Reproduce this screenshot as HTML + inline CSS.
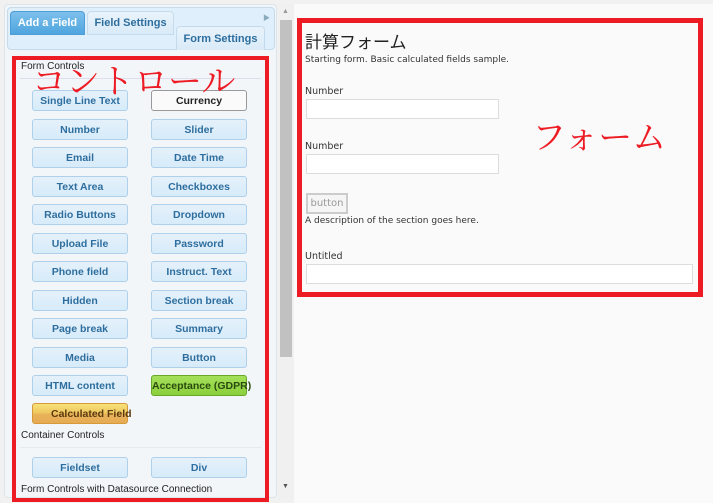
<!DOCTYPE html>
<html><head><meta charset="utf-8"><style>
*{box-sizing:border-box;margin:0;padding:0}
body{width:713px;height:503px;background:#f1f1f1;position:relative;overflow:hidden;font-family:"Liberation Sans","Noto Sans CJK JP",sans-serif}
.a{position:absolute}
.btn{position:absolute;width:96px;height:21px;border:1px solid #aed0ea;border-radius:3px;background:linear-gradient(#e4f1fb,#d7ebf9);color:#2e6e9e;font-weight:bold;font-size:10.5px;text-align:center;line-height:20px;white-space:nowrap}
.lab{position:absolute;font-size:10px;color:#222}
.rt{position:absolute;font-family:"DejaVu Sans",sans-serif;font-size:9.5px;color:#333}
.in{position:absolute;height:20px;border:1px solid #ddd;background:#fff}
</style></head><body>
<div class="a" style="left:4px;top:4px;width:273px;height:494px;background:#f3f6f9;border:1px solid #dde4ea;border-radius:4px"></div>
<div class="a" style="left:7px;top:7px;width:268px;height:43px;background:#dfeffc;border:1px solid #c5dbec;border-radius:4px"></div>
<div class="a" style="left:10px;top:11px;width:75px;height:24px;background:linear-gradient(#7dc0ec,#4ea5de);border:1px solid #4d9dd6;border-radius:4px 4px 0 0;color:#fff;font-weight:bold;font-size:11px;text-align:center;line-height:22px">Add a Field</div>
<div class="a" style="left:87px;top:11px;width:87px;height:24px;background:linear-gradient(#e9f3fb,#d9ebf8);border:1px solid #c5dbec;border-radius:4px 4px 0 0;color:#2e6e9e;font-weight:bold;font-size:11px;text-align:center;line-height:22px">Field Settings</div>
<div class="a" style="left:176px;top:26px;width:89px;height:24px;background:linear-gradient(#e9f3fb,#d9ebf8);border:1px solid #c5dbec;border-bottom:none;border-radius:4px 4px 0 0;color:#2e6e9e;font-weight:bold;font-size:11px;text-align:center;line-height:24px">Form Settings</div>
<div class="a" style="left:263px;top:13px;font-size:7px;color:#8ab">&#9654;</div>
<div class="lab" style="left:21px;top:61px">Form Controls</div>
<div class="a" style="left:20px;top:78px;width:241px;height:1px;background:#dde"></div>
<div class="btn" style="left:32px;top:90px">Single Line Text</div>
<div class="btn" style="left:151px;top:90px;background:#fafafa;border-color:#999;color:#222">Currency</div>
<div class="btn" style="left:32px;top:119px">Number</div><div class="btn" style="left:151px;top:119px">Slider</div>
<div class="btn" style="left:32px;top:147px">Email</div><div class="btn" style="left:151px;top:147px">Date Time</div>
<div class="btn" style="left:32px;top:176px">Text Area</div><div class="btn" style="left:151px;top:176px">Checkboxes</div>
<div class="btn" style="left:32px;top:204px">Radio Buttons</div><div class="btn" style="left:151px;top:204px">Dropdown</div>
<div class="btn" style="left:32px;top:233px">Upload File</div><div class="btn" style="left:151px;top:233px">Password</div>
<div class="btn" style="left:32px;top:261px">Phone field</div><div class="btn" style="left:151px;top:261px">Instruct. Text</div>
<div class="btn" style="left:32px;top:290px">Hidden</div><div class="btn" style="left:151px;top:290px">Section break</div>
<div class="btn" style="left:32px;top:318px">Page break</div><div class="btn" style="left:151px;top:318px">Summary</div>
<div class="btn" style="left:32px;top:347px">Media</div><div class="btn" style="left:151px;top:347px">Button</div>
<div class="btn" style="left:32px;top:375px">HTML content</div>
<div class="btn" style="left:151px;top:375px;background:linear-gradient(#a4e05a,#8ccf3c);border-color:#6aa82a;color:#2a4a10;overflow:visible">Acceptance (GDPR)</div>
<div class="btn" style="left:32px;top:403px;background:linear-gradient(#f7e27a 0%,#f0c860 45%,#e8b25a 55%,#e6ab55);border-color:#d79a3a;color:#5a3a10;padding-left:18px;overflow:visible">Calculated Field</div>
<div class="lab" style="left:21px;top:430px">Container Controls</div>
<div class="a" style="left:20px;top:447px;width:241px;height:1px;background:#e6eaee"></div>
<div class="btn" style="left:32px;top:457px">Fieldset</div><div class="btn" style="left:151px;top:457px">Div</div>
<div class="lab" style="left:21px;top:484px">Form Controls with Datasource Connection</div>
<div class="a" style="left:12px;top:56px;width:257px;height:446px;border:4px solid #ed1c24"></div>
<div class="a" style="left:32px;top:59px;color:#ed1c24;font-family:'Noto Serif CJK SC',serif;font-size:34px;line-height:40px">コントロール</div>
<div class="a" style="left:278px;top:4px;width:16px;height:494px;background:#f0f0f0"></div>
<div class="a" style="left:280px;top:20px;width:12px;height:337px;background:#c1c1c1"></div>
<div class="a" style="left:282px;top:8px;font-size:7px;color:#999">&#9650;</div>
<div class="a" style="left:282px;top:483px;font-size:7px;color:#555">&#9660;</div>
<div class="a" style="left:294px;top:4px;width:419px;height:499px;background:#fafafa"></div>
<div class="a" style="left:297px;top:18px;width:406px;height:279px;border:5px solid #ed1c24"></div>
<div class="a" style="left:305px;top:28px;font-size:17px;color:#222;font-family:'Liberation Sans','Noto Sans CJK JP',sans-serif">計算フォーム</div>
<div class="rt" style="left:305px;top:55px;font-size:9px">Starting form. Basic calculated fields sample.</div>
<div class="rt" style="left:305px;top:86px">Number</div>
<div class="in" style="left:306px;top:99px;width:193px"></div>
<div class="rt" style="left:305px;top:141px">Number</div>
<div class="in" style="left:306px;top:154px;width:193px"></div>
<div class="a" style="left:306px;top:193px;width:42px;height:21px;border:2px solid #ccc;background:#f5f5f5;font-family:'DejaVu Sans',sans-serif;font-size:10px;color:#999;text-align:center;line-height:17px">button</div>
<div class="rt" style="left:305px;top:216px;font-size:9px">A description of the section goes here.</div>
<div class="rt" style="left:305px;top:251px">Untitled</div>
<div class="in" style="left:306px;top:264px;width:387px"></div>
<div class="a" style="left:532px;top:115px;color:#ed1c24;font-family:'Noto Serif CJK SC',serif;font-size:34px;line-height:40px">フォーム</div>
</body></html>
